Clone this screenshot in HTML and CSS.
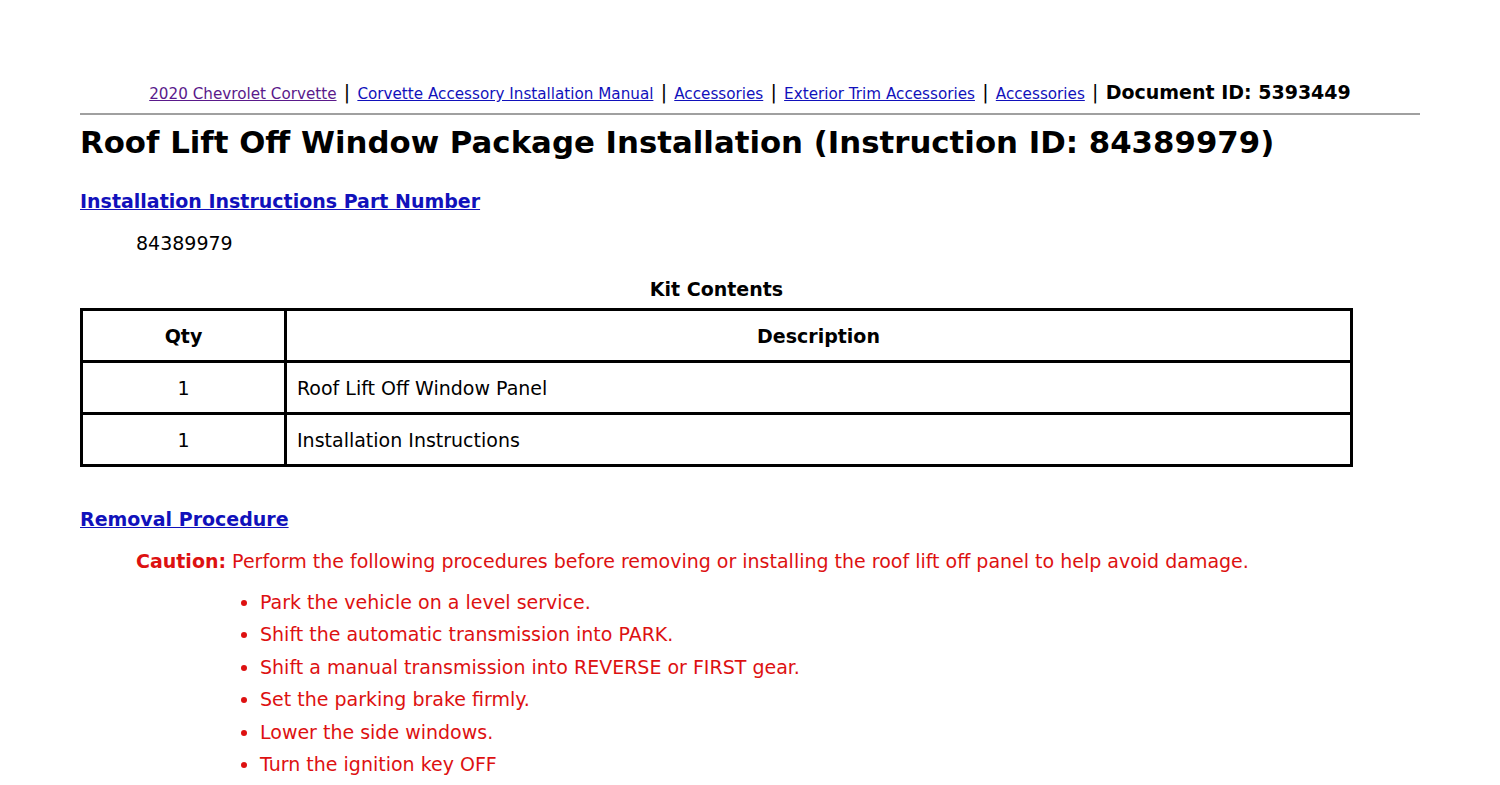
FILE: index.html
```html
<!DOCTYPE html>
<html>
<head>
<meta charset="utf-8">
<link rel="stylesheet" href="styles.css">
</head>
<body>
<div class="page">
  <div class="crumbs"><a class="visited" href="#">2020 Chevrolet Corvette</a> <span class="sep">|</span> <a href="#">Corvette Accessory Installation Manual</a> <span class="sep">|</span> <a href="#">Accessories</a> <span class="sep">|</span> <a href="#">Exterior Trim Accessories</a> <span class="sep">|</span> <a href="#">Accessories</a> <span class="sep">|</span> <span class="docid">Document ID: 5393449</span></div>
  <hr class="rule">
  <h1 class="title">Roof Lift Off Window Package Installation (Instruction ID: 84389979)</h1>
  <h2 class="section"><a href="#">Installation Instructions Part Number</a></h2>
  <p class="indent">84389979</p>
  <table class="kit">
    <caption>Kit Contents</caption>
    <thead>
      <tr><th class="qty">Qty</th><th>Description</th></tr>
    </thead>
    <tbody>
      <tr><td class="qty">1</td><td>Roof Lift Off Window Panel</td></tr>
      <tr><td class="qty">1</td><td>Installation Instructions</td></tr>
    </tbody>
  </table>
  <h2 class="section removal"><a href="#">Removal Procedure</a></h2>
  <p class="caution"><b>Caution:</b> Perform the following procedures before removing or installing the roof lift off panel to help avoid damage.</p>
  <ul class="steps">
    <li>Park the vehicle on a level service.</li>
    <li>Shift the automatic transmission into PARK.</li>
    <li>Shift a manual transmission into REVERSE or FIRST gear.</li>
    <li>Set the parking brake firmly.</li>
    <li>Lower the side windows.</li>
    <li>Turn the ignition key OFF</li>
  </ul>
</div>
</body>
</html>
```

FILE: styles.css
```css
html, body {
  margin: 0;
  padding: 0;
  background: #fff;
}
body {
  font-family: "DejaVu Sans", Verdana, sans-serif;
  font-size: 19px;
  color: #000;
}
.page {
  padding: 80px 80px 0 80px;
}
.crumbs {
  text-align: center;
  font-size: 15.2px;
  line-height: 24px;
  height: 24px;
}
.crumbs a {
  color: #1111bb;
}
.crumbs a.visited {
  color: #5a1a8b;
}
.crumbs .sep {
  font-size: 19px;
  margin: 0 2.4px;
}
.crumbs .docid {
  font-size: 19px;
  font-weight: bold;
}
.rule {
  margin: 9px 0 0 0;
  border: 0;
  border-top: 2px solid #a0a0a0;
  height: 0;
}
.title {
  font-size: 30.8px;
  font-weight: bold;
  margin: 8px 0 0 0;
  line-height: 38px;
}
.section {
  font-size: 19px;
  font-weight: bold;
  margin: 28px 0 0 0;
  line-height: 24px;
}
.section a {
  color: #1111bb;
}
.indent {
  margin: 18px 0 0 56px;
  line-height: 24px;
}
.kit {
  width: 95%;
  border-collapse: collapse;
  border: 3px solid #000;
  margin-top: 22px;
}
.kit caption {
  font-weight: bold;
  line-height: 24px;
  padding-bottom: 7px;
}
.kit th, .kit td {
  border: 3px solid #000;
  height: 49px;
  padding: 0 10px;
  text-align: left;
}
.kit th {
  text-align: center;
}
.kit .qty {
  width: 181px;
  text-align: center;
}
.removal {
  margin-top: 40px;
}
.caution {
  color: #dd1111;
  margin: 18px 0 0 56px;
  line-height: 24px;
}
.steps {
  color: #dd1111;
  margin: 13px 0 0 0;
  padding-left: 180px;
}
.steps li {
  line-height: 32.4px;
}
```
